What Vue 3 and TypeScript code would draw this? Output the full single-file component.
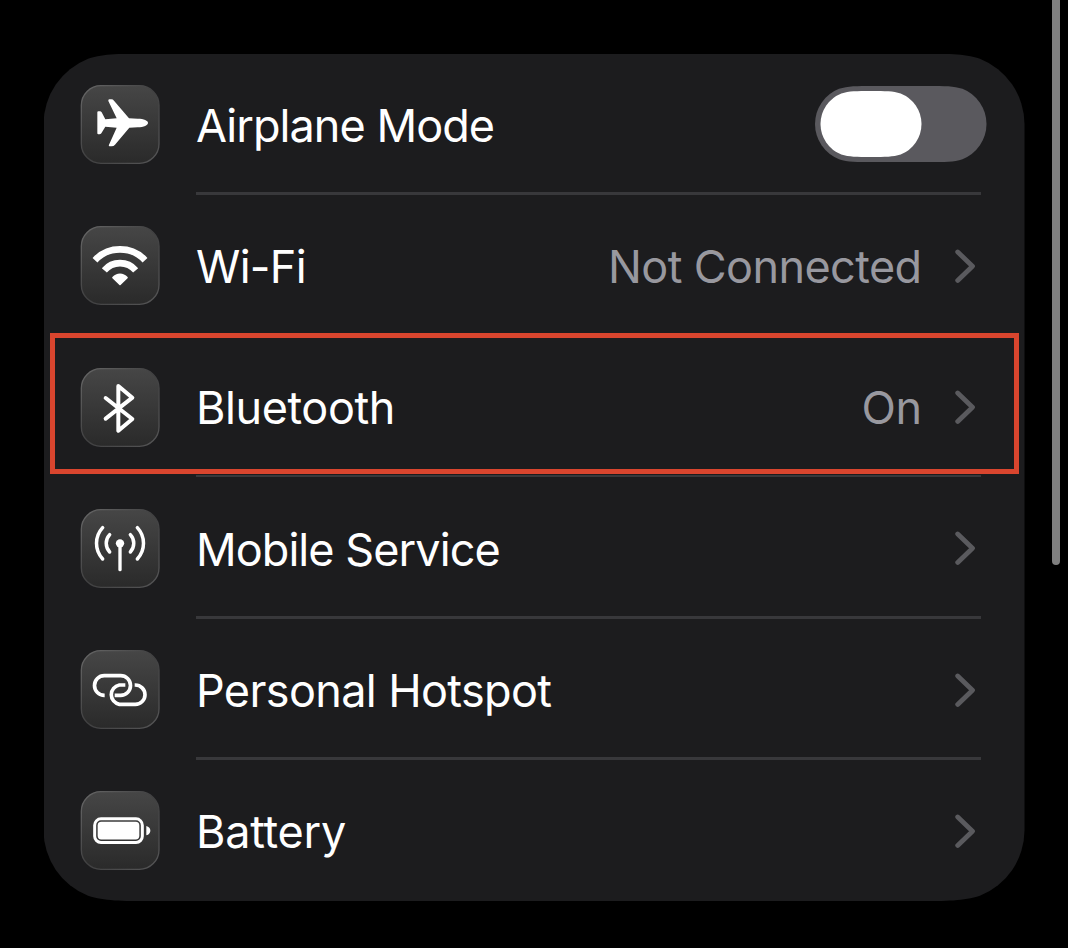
<script setup lang="ts">
type IconName = 'airplane' | 'wifi' | 'bluetooth' | 'cellular' | 'hotspot' | 'battery'

interface SettingRow {
  icon: IconName
  label: string
  tracking: number
  value?: string
  valueTracking?: number
  toggle?: boolean
  highlighted?: boolean
}

const rows: SettingRow[] = [
  { icon: 'airplane', label: 'Airplane Mode', tracking: -0.95, toggle: true },
  { icon: 'wifi', label: 'Wi-Fi', tracking: -0.7, value: 'Not Connected', valueTracking: -0.6 },
  { icon: 'bluetooth', label: 'Bluetooth', tracking: -0.42, value: 'On', valueTracking: -0.5, highlighted: true },
  { icon: 'cellular', label: 'Mobile Service', tracking: -0.93 },
  { icon: 'hotspot', label: 'Personal Hotspot', tracking: -0.63 },
  { icon: 'battery', label: 'Battery', tracking: -0.25 },
]

// Rounded shape whose corners ease into the horizontal edges.
function softRect(x: number, y: number, w: number, h: number, r: number): string {
  const a = 1.5286 * r
  const b = 1.0885 * r
  const c = 0.8684 * r
  const d = 0.6315 * r
  const e = 0.0749 * r
  const R = x + w
  const B = y + h
  return [
    `M${x + a} ${y}H${R - a}`,
    `C${R - b} ${y} ${R - c} ${y} ${R - d} ${y + e}`,
    `A${r} ${r} 0 0 1 ${R} ${y + r}V${B - r}`,
    `A${r} ${r} 0 0 1 ${R - d} ${B - e}`,
    `C${R - c} ${B} ${R - b} ${B} ${R - a} ${B}H${x + a}`,
    `C${x + b} ${B} ${x + c} ${B} ${x + d} ${B - e}`,
    `A${r} ${r} 0 0 1 ${x} ${B - r}V${y + r}`,
    `A${r} ${r} 0 0 1 ${x + d} ${y + e}`,
    `C${x + c} ${y} ${x + b} ${y} ${x + a} ${y}Z`,
  ].join('')
}

const cardClip = `path("${softRect(0, 0, 981, 847.5, 70.6)}")`
const trackPath = softRect(0, 0, 171.5, 76, 38)
const knobPath = softRect(5.5, 5, 101, 66, 33)
</script>

<template>
  <main class="screen">
    <section class="card" :style="{ clipPath: cardClip }">
      <div v-for="row in rows" :key="row.icon" class="row" :class="{ highlighted: row.highlighted }">
        <svg class="tile" viewBox="30 29 240 237">
          <defs>
            <linearGradient :id="`fill-${row.icon}`" x1="0" y1="0" x2="0" y2="1">
              <stop offset="0" stop-color="#464646" />
              <stop offset="1" stop-color="#2a2a2a" />
            </linearGradient>
            <linearGradient :id="`edge-${row.icon}`" x1="0" y1="0" x2="1" y2="1">
              <stop offset="0" stop-color="#686868" />
              <stop offset="0.5" stop-color="#404041" />
              <stop offset="1" stop-color="#565657" />
            </linearGradient>
          </defs>
          <rect x="34" y="31" width="233" height="233" rx="59" :fill="`url(#fill-${row.icon})`" :stroke="`url(#edge-${row.icon})`" stroke-width="4" />

          <path
            v-if="row.icon === 'airplane'"
            class="solid"
            d="M203 130C222 130 234 136 234 142.500C234 150 222 156 203 156L178 157L135 208Q131 213 125 213H118Q115 212 117 208L140 157L106 154L94 174Q92 177 88 177H85Q82 177 82 174V111Q82 108 85 108H90Q93 108 95 111L106 132L140 129L115 77Q114 72 118 72H124Q129 72 132 76L177 129Z"
          />
          <template v-else-if="row.icon === 'wifi'">
            <path class="line" stroke-width="20" d="M75 131.500A103 103 0 0 1 225 131.500" />
            <path class="line" stroke-width="20" d="M103 162A62 62 0 0 1 197 162" />
            <path class="solid" stroke="#fff" stroke-width="5" stroke-linejoin="round" d="M150 204L129 184Q138 174 150 174T171 184Z" />
          </template>
          <path v-else-if="row.icon === 'bluetooth'" class="line round" stroke-width="12" d="M107 119L187 182L145 217V83L187 118L107 181" />
          <template v-else-if="row.icon === 'cellular'">
            <circle class="solid" cx="150" cy="132" r="12.500" />
            <path class="line round" stroke-width="10" d="M150 132V211" />
            <path class="line round" stroke-width="10.500" d="M119 106A38 38 0 0 0 119 158M181 106A38 38 0 0 1 181 158M98 85A69 69 0 0 0 98 179M202 85A69 69 0 0 1 202 179" />
          </template>
          <path
            v-else-if="row.icon === 'hotspot'"
            class="line"
            stroke-width="11"
            d="M104 165H103A29.500 29.500 0 0 1 103 106H152A29.500 29.500 0 0 1 152 165H134M166 134H148A29.500 29.500 0 0 0 148 192H196A29 29 0 0 0 196 134H194"
          />
          <template v-else>
            <rect class="line" x="74" y="112.500" width="143" height="71" rx="19" stroke-width="9" />
            <rect class="solid" x="83" y="121.500" width="125" height="53" rx="11" />
            <path class="solid" d="M229 134Q241 138 241 148T229 162Z" />
          </template>
        </svg>

        <div class="content">
          <span class="label" :style="{ letterSpacing: row.tracking + 'px' }">{{ row.label }}</span>
          <svg v-if="row.toggle" class="toggle" viewBox="0 0 171.5 76">
            <path :d="trackPath" fill="#5a595e" />
            <path :d="knobPath" fill="#fff" />
          </svg>
          <template v-else>
            <span v-if="row.value" class="value" :style="{ letterSpacing: row.valueTracking + 'px' }">{{ row.value }}</span>
            <svg class="chevron" viewBox="0 0 21 36">
              <path d="M2.700 4L17.500 18.200L2.700 32.400" />
            </svg>
          </template>
        </div>
      </div>
    </section>
    <div class="scrollbar"></div>
  </main>
</template>

<style>
body {
  margin: 0;
  background: #000;
}
</style>

<style scoped>
.screen {
  position: relative;
  box-sizing: border-box;
  width: 1068px;
  height: 948px;
  padding: 53.5px 0 0 43.5px;
  overflow: hidden;
  background: #000;
  font-family: Inter, "Liberation Sans", sans-serif;
}

.card {
  width: 981px;
  height: 847.5px;
  background: #1c1c1e;
}

.row {
  position: relative;
  display: flex;
  align-items: center;
  height: 141.25px;
  padding-left: 36.5px;
}

.tile {
  flex: none;
  width: 80px;
  height: 79px;
  margin-top: 0.8px;
}

.content {
  position: relative;
  display: flex;
  flex: 1;
  align-items: center;
  height: 100%;
  margin-left: 36px;
  padding-right: 49px;
}

.row:not(:last-child) .content::after {
  content: "";
  position: absolute;
  right: 43.5px;
  bottom: 0;
  left: 0;
  height: 2.6px;
  background: #38383b;
}

.highlighted::after {
  content: "";
  position: absolute;
  z-index: 1;
  top: -3px;
  left: 6.5px;
  box-sizing: border-box;
  width: 968.5px;
  height: 141px;
  border: 5px solid #d9452e;
}

.label,
.value {
  font-size: 45px;
  line-height: 56px;
  white-space: nowrap;
  padding-top: 3.5px;
}

.label {
  flex: 1;
  color: #fff;
}

.value {
  margin-right: 33px;
  color: #98989f;
}

.toggle {
  flex: none;
  width: 171.5px;
  height: 76px;
  margin-right: -11px;
}

.chevron {
  flex: none;
  width: 21px;
  height: 36px;
  margin-top: 0.8px;
}

.chevron path {
  fill: none;
  stroke: #5a5a5e;
  stroke-width: 4.8;
  stroke-linecap: round;
  stroke-linejoin: round;
}

.solid {
  fill: #fff;
}

.line {
  fill: none;
  stroke: #fff;
}

.round {
  stroke-linecap: round;
  stroke-linejoin: round;
}

.scrollbar {
  position: absolute;
  top: -8px;
  right: 8px;
  width: 8px;
  height: 573px;
  border-radius: 4px;
  background: #808080;
}
</style>
